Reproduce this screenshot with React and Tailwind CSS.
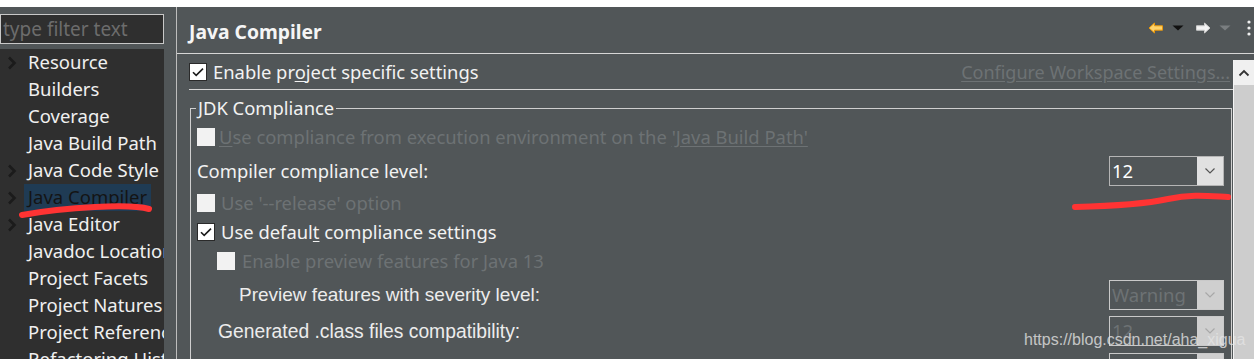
import React from "react";

function Check({ checked, disabled }) {
  return (
    <span
      className={`w-[18px] h-[18px] flex items-center justify-center shrink-0 ${
        disabled ? "bg-[#f2f2f2]" : "bg-white border border-[#2a2a2a]"
      }`}
    >
      {checked && (
        <svg width="14" height="14" viewBox="0 0 14 14">
          <path d="M2 7.2 L5.2 10.4 L12 3.6" fill="none" stroke="#1a1a1a" strokeWidth="1.6" />
        </svg>
      )}
    </span>
  );
}

function Combo({ value, disabled }) {
  return (
    <div
      className={`w-[115px] h-[30px] flex border shrink-0 ${
        disabled ? "border-[#c9c9c9]" : "border-[#b5b5b5]"
      }`}
    >
      <div
        className={`flex-1 flex items-center pl-[2px] text-[18.5px] ${
          disabled ? "text-[#6d7274]" : "text-white"
        }`}
      >
        {value}
      </div>
      <div
        className={`w-[26px] flex items-center justify-center ${
          disabled ? "bg-[#cfcfcf]" : "bg-[#e1e1e1]"
        }`}
      >
        <svg width="12" height="8" viewBox="0 0 12 8">
          <path
            d="M1.5 1.5 L6 6 L10.5 1.5"
            fill="none"
            stroke={disabled ? "#a8a8a8" : "#555"}
            strokeWidth="1.2"
          />
        </svg>
      </div>
    </div>
  );
}

function Arrow() {
  return (
    <svg width="10" height="14" viewBox="0 0 10 14" className="shrink-0">
      <path d="M2 1.5 L7.5 7 L2 12.5" fill="none" stroke="#1b1b1b" strokeWidth="2.6" />
    </svg>
  );
}

const treeItems = [
  { t: "Resource", a: true },
  { t: "Builders" },
  { t: "Coverage" },
  { t: "Java Build Path" },
  { t: "Java Code Style", a: true },
  { t: "Java Compiler", a: true, sel: true },
  { t: "Java Editor", a: true },
  { t: "Javadoc Location" },
  { t: "Project Facets" },
  { t: "Project Natures" },
  { t: "Project References" },
  { t: "Refactoring History" },
];

export default function App() {
  return (
    <div className="relative w-[1254px] h-[359px] overflow-hidden bg-[#515658] flex flex-col font-['Noto_Sans',sans-serif] text-[#f2f2f2]">
      <div className="h-[7px] bg-white shrink-0" />
      <div className="flex flex-1 min-h-0">
        {/* left panel */}
        <div className="w-[176px] shrink-0 flex flex-col">
          <div className="w-[164px] mt-[7px] h-[30px] border border-[#c8c8c8] bg-[#2f2f2f] flex items-center pl-[2px] text-[19px] text-[#6c6c6c] leading-none shrink-0">
            type filter text
          </div>
          <div className="w-[164px] mt-[5px] flex-1 bg-[#2f2f2f] overflow-hidden">
            {treeItems.map((it) => (
              <div key={it.t} className="h-[27px] flex items-center whitespace-nowrap">
                <div className="w-[24px] pl-[7px] flex items-center shrink-0">
                  {it.a && <Arrow />}
                </div>
                <span
                  className={`px-[4px] h-[27px] flex items-center pb-[2px] text-[18.5px] ${
                    it.sel ? "bg-[#1f3b54] text-[#141414]" : "text-[#f0f0f0]"
                  }`}
                >
                  {it.t}
                </span>
              </div>
            ))}
          </div>
        </div>
        <div className="w-px bg-[#bdbdbd] shrink-0" />
        {/* right panel */}
        <div className="flex-1 flex flex-col min-w-0">
          <div className="h-[46px] shrink-0 flex items-center justify-between pl-[12px]">
            <span className="text-[19.3px] font-bold text-[#f5f5f5] mt-[5px]">Java Compiler</span>
            <div className="flex items-center mr-[3px] mt-[-4px]">
              <svg width="16" height="12" viewBox="0 0 16 12" className="mr-[8px]">
                <path d="M1 6 L6.5 1 L6.5 3.8 L14.5 3.8 L14.5 8.2 L6.5 8.2 L6.5 11 Z" fill="#ffd36a" stroke="#e8960a" strokeWidth="1" />
              </svg>
              <svg width="12" height="6" viewBox="0 0 12 6" className="mr-[11px]">
                <path d="M0.5 0.5 L11.5 0.5 L6 5.5 Z" fill="#111" />
              </svg>
              <svg width="16" height="12" viewBox="0 0 16 12" className="mr-[8px]">
                <path d="M15 6 L9.5 1 L9.5 3.8 L1.5 3.8 L1.5 8.2 L9.5 8.2 L9.5 11 Z" fill="#f4f4f4" stroke="#cfcfcf" strokeWidth="1" />
              </svg>
              <svg width="12" height="6" viewBox="0 0 12 6" className="mr-[16px]">
                <path d="M0.5 0.5 L11.5 0.5 L6 5.5 Z" fill="#7a7e80" />
              </svg>
              <svg width="4" height="16" viewBox="0 0 4 16">
                <circle cx="2" cy="2" r="1.6" fill="#f0f0f0" />
                <circle cx="2" cy="8" r="1.6" fill="#f0f0f0" />
                <circle cx="2" cy="14" r="1.6" fill="#f0f0f0" />
              </svg>
            </div>
          </div>
          <div className="h-px bg-[#d6d6d6] shrink-0" />
          <div className="flex flex-1 min-h-0">
            <div className="w-[1056px] shrink-0 flex flex-col">
              <div className="h-[35px] shrink-0 flex items-center justify-between pl-[12px] pr-[3px]">
                <div className="flex items-center gap-[6px] mt-[1px]">
                  <Check checked />
                  <span className="text-[18.4px]">
                    Enable pr<span className="underline underline-offset-2">o</span>ject specific settings
                  </span>
                </div>
                <span className="text-[18px] text-[#6d7274] underline underline-offset-2 mt-[1px]">
                  Configure Workspace Settings...
                </span>
              </div>
              <div className="ml-[12px] h-px bg-[#d6d6d6] shrink-0" />
              <fieldset className="mt-[6px] ml-[13px] mr-px border border-b-0 border-[#cfcfcf] flex-1 min-h-0">
                <legend className="ml-[5px] px-[2px] h-[24px] leading-[24px] text-[18.4px] text-[#f2f2f2]">
                  JDK Compliance
                </legend>
                <div className="flex flex-col pl-[6px] pr-[7px]">
                  <div className="h-[34px] flex items-center gap-[4px]">
                    <Check disabled />
                    <span className="text-[18.4px] text-[#6d7274]">
                      <span className="underline underline-offset-2">U</span>se compliance from execution environment on the{" "}
                      <span className="underline underline-offset-2">'Java Build Path'</span>
                    </span>
                  </div>
                  <div className="h-[33px] flex items-center justify-between">
                    <span className="text-[18.4px]">Compiler compliance level:</span>
                    <Combo value="12" />
                  </div>
                  <div className="h-[32px] flex items-center gap-[6px]">
                    <Check disabled />
                    <span className="text-[18.4px] text-[#6d7274]">Use '--release' option</span>
                  </div>
                  <div className="h-[26px] flex items-center gap-[6px]">
                    <Check checked />
                    <span className="text-[18.4px]">
                      Use defaul<span className="underline underline-offset-2">t</span> compliance settings
                    </span>
                  </div>
                  <div className="h-[32px] flex items-center gap-[7px] pl-[20px]">
                    <Check disabled />
                    <span className="text-[18.4px] text-[#6d7274]">Enable preview features for Java 13</span>
                  </div>
                  <div className="h-[35px] flex items-center justify-between">
                    <span className="pl-[42px] text-[19px] font-['Liberation_Sans',sans-serif] text-[#ececec] mt-[1px]">
                      Preview features with severity level:
                    </span>
                    <Combo value="Warning" disabled />
                  </div>
                  <div className="h-[37px] flex items-center justify-between">
                    <span className="pl-[21px] text-[19.3px] font-['Liberation_Sans',sans-serif] text-[#ececec] mt-[4px]">
                      Generated .class files compatibility:
                    </span>
                    <Combo value="12" disabled />
                  </div>
                  <div className="h-[37px] flex items-center justify-end">
                    <Combo value="" disabled />
                  </div>
                </div>
              </fieldset>
            </div>
            <div className="w-[21px] shrink-0 mt-[6px] flex flex-col border-l border-[#f4f4f4]">
              <div className="h-[25px] bg-[#f0f0f0] flex items-center justify-center shrink-0">
                <svg width="12" height="8" viewBox="0 0 12 8">
                  <path d="M1.5 6.5 L6 2 L10.5 6.5" fill="none" stroke="#333" strokeWidth="1.8" />
                </svg>
              </div>
              <div className="flex-1 bg-[#cdcdcd]" />
            </div>
          </div>
        </div>
      </div>

      {/* red annotation strokes */}
      <svg className="absolute left-0 top-0 pointer-events-none" width="1254" height="359" viewBox="0 0 1254 359">
        <path d="M22 215 Q 55 209 95 207 T 149 209" fill="none" stroke="#ff3333" strokeWidth="6" strokeLinecap="round" />
        <path d="M1075 207 C 1115 206 1145 204 1168 199 S 1208 196 1228 197" fill="none" stroke="#ff3333" strokeWidth="6" strokeLinecap="round" />
      </svg>

      {/* watermark */}
      <div className="absolute left-[1024px] top-[329px] text-[16px] leading-[22px] font-['Liberation_Sans',sans-serif] text-[#e4e4e4]/80 whitespace-nowrap pointer-events-none">
        https://blog.csdn.net/aha_xigua
      </div>
    </div>
  );
}
